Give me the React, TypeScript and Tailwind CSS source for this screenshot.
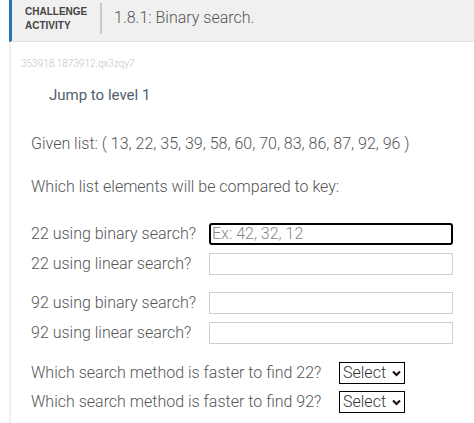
const rows = [
  { label: "22 using binary search?", focus: true },
  { label: "22 using linear search?" },
  { label: "92 using binary search?", gap: true },
  { label: "92 using linear search?" },
];

function Select() {
  return (
    <div className="flex h-[22px] w-[66px] items-center justify-between border border-black bg-white pl-[3px] pr-[3px] text-[16px] text-[#333]">
      <span>Select</span>
      <svg width="9" height="7" viewBox="0 0 9 7">
        <path d="M1 1.5 L4.5 5 L8 1.5" fill="none" stroke="#111" strokeWidth="2" />
      </svg>
    </div>
  );
}

export default function App() {
  return (
    <div className="h-[423px] w-[474px] overflow-hidden bg-white font-['Roboto',sans-serif] font-light text-[#555]">
      <div className="ml-[9px] flex h-[42px] items-stretch border-b border-[#e2e2e2] border-l-[3px] border-l-[#1f78b4] bg-[#f0f0f0]">
        <div className="flex w-[88px] flex-col justify-center pl-[13px] pb-[3px] font-['Liberation_Sans',sans-serif] text-[10px] font-bold leading-[14px] text-[#444]">
          <span>CHALLENGE</span>
          <span>ACTIVITY</span>
        </div>
        <div className="mt-[3px] mb-[7px] w-[2px] bg-[#c8c8c8]" />
        <div className="flex items-center pb-[6px] pl-[12px] text-[16px] text-[#555]">1.8.1: Binary search.</div>
      </div>

      <div className="ml-[9px] h-full border-l-2 border-[#efefef]">
        <div className="pl-[10px] pt-[17px] text-[10px] leading-[10px] text-[#c4c4c4]">353918.1873912.qx3zqy7</div>
        <div className="pl-[38px] pt-[16px] text-[15px] font-normal leading-[20px] text-[#52606d]">Jump to level 1</div>

        <div className="pl-[20px] pt-[29px] text-[16px] leading-[20px]">
          <p>Given list: ( 13, 22, 35, 39, 58, 60, 70, 83, 86, 87, 92, 96 )</p>
          <p className="mt-[23px]">Which list elements will be compared to key:</p>

          <div className="mt-[26px] flex flex-col">
            {rows.map((r) => (
              <div key={r.label} className={`mb-[8px] flex h-[22px] items-center ${r.gap ? "mt-[9px]" : ""}`}>
                <span className="w-[178px]">{r.label}</span>
                {r.focus ? (
                  <div className="flex h-[22px] w-[244px] items-center rounded-[3px] border-2 border-black bg-white pl-[1px] text-[16px] text-[#888]">
                    Ex: 42, 32, 12
                  </div>
                ) : (
                  <div className="h-[22px] w-[244px] border border-[#cfcfcf] bg-white" />
                )}
              </div>
            ))}
          </div>

          <div className="mt-[10px] flex flex-col gap-[7px]">
            <div className="flex h-[22px] items-center">
              <span className="w-[308px]">Which search method is faster to find 22?</span>
              <Select />
            </div>
            <div className="flex h-[22px] items-center">
              <span className="w-[308px]">Which search method is faster to find 92?</span>
              <Select />
            </div>
          </div>
        </div>
      </div>
    </div>
  );
}
